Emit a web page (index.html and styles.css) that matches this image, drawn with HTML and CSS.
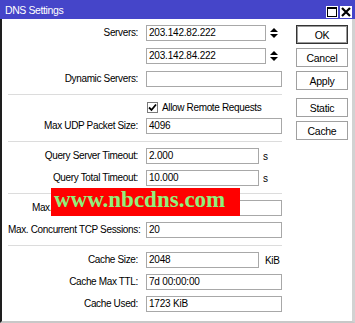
FILE: index.html
```html
<!DOCTYPE html>
<html>
<head>
<meta charset="utf-8">
<link rel="stylesheet" href="styles.css">
</head>
<body>
<div class="window">
  <div class="titlebar">
    <span class="title">DNS Settings</span>
    <div class="tb-btns">
      <span class="tb-btn"><svg width="10" height="10" viewBox="0 0 10 10"><rect x="0.5" y="0.5" width="9" height="9" fill="none" stroke="#000" stroke-width="1"/><rect x="0" y="0" width="10" height="2" fill="#000"/></svg></span>
      <span class="tb-btn"><svg width="10" height="10" viewBox="0 0 10 10"><path d="M1 1 L9 9 M9 1 L1 9" stroke="#000" stroke-width="2.2"/></svg></span>
    </div>
  </div>
  <div class="body">
    <div class="form">
      <div class="sec s1">
        <div class="row"><span class="lbl">Servers:</span><span class="field w-spin">203.142.82.222</span><svg class="spin" width="8" height="10" viewBox="0 0 8 10"><path d="M0 4 L4 0 L8 4 Z M0 6 L8 6 L4 10 Z" fill="#000"/></svg></div>
        <div class="row"><span class="lbl"></span><span class="field w-spin">203.142.84.222</span><svg class="spin" width="8" height="10" viewBox="0 0 8 10"><path d="M0 4 L4 0 L8 4 Z M0 6 L8 6 L4 10 Z" fill="#000"/></svg></div>
        <div class="row"><span class="lbl">Dynamic Servers:</span><span class="field w-full"></span></div>
      </div>
      <div class="sec s2">
        <div class="row"><span class="lbl"></span><span class="check"><svg width="9" height="9" viewBox="0 0 9 9"><path d="M1 4.5 L3.5 7 L8 1.5" fill="none" stroke="#000" stroke-width="1.8"/></svg></span><span class="cb-text">Allow Remote Requests</span></div>
        <div class="row"><span class="lbl">Max UDP Packet Size:</span><span class="field w-full">4096</span></div>
      </div>
      <div class="sec">
        <div class="row"><span class="lbl">Query Server Timeout:</span><span class="field w-unit">2.000</span><span class="unit">s</span></div>
        <div class="row"><span class="lbl">Query Total Timeout:</span><span class="field w-unit">10.000</span><span class="unit">s</span></div>
      </div>
      <div class="sec">
        <div class="row"><span class="lbl">Max. Concurrent Queries:</span><span class="field w-full">100</span></div>
        <div class="row"><span class="lbl">Max. Concurrent TCP Sessions:</span><span class="field w-full">20</span></div>
      </div>
      <div class="sec last">
        <div class="row"><span class="lbl">Cache Size:</span><span class="field w-unit">2048</span><span class="unit kib">KiB</span></div>
        <div class="row"><span class="lbl">Cache Max TTL:</span><span class="field w-full">7d 00:00:00</span></div>
        <div class="row"><span class="lbl">Cache Used:</span><span class="field w-full">1723 KiB</span></div>
      </div>
    </div>
    <div class="buttons">
      <button class="btn default">OK</button>
      <button class="btn">Cancel</button>
      <button class="btn">Apply</button>
      <button class="btn gap">Static</button>
      <button class="btn">Cache</button>
    </div>
  </div>
  <div class="watermark">www.nbcdns.com</div>
</div>
</body>
</html>
```
FILE: styles.css
```css
* { box-sizing: border-box; }
html, body { margin: 0; padding: 0; background: #fff; }
body {
  font-family: "Liberation Sans", Arial, sans-serif;
  font-size: 10px;
  letter-spacing: -0.35px;
  color: #000;
}
.window {
  position: relative;
  width: 355px;
  height: 323px;
}
.titlebar {
  height: 19px;
  background: #4545c9;
  display: flex;
  align-items: center;
  justify-content: space-between;
  padding: 0 3px 0 5px;
}
.title {
  color: #fff;
  font-size: 10.5px;
  letter-spacing: -0.4px;
  line-height: 19px;
  padding-top: 1px;
}
.tb-btns { display: flex; gap: 2px; align-self: flex-end; margin-bottom: 1px; }
.tb-btn {
  width: 12px;
  height: 12px;
  background: #fff;
  display: flex;
  align-items: center;
  justify-content: center;
}
.tb-btn svg { display: block; }
.body {
  display: flex;
  height: 304px;
  border-left: 2px solid #1e1e1e;
  border-right: 3px solid #d2d2d2;
  border-bottom: 2px solid #c8c8c8;
}
.form {
  margin-left: 6px;
  width: 274px;
}
.sec {
  display: flex;
  flex-direction: column;
  gap: 6px;
  padding: 6px 0 7px;
  border-bottom: 1px solid #dcdcdc;
}
.sec.s1 { gap: 7px; padding-top: 6px; padding-bottom: 7px; }
.sec.s2 { gap: 3px; padding-top: 4px; padding-bottom: 7px; }
.sec.last { border-bottom: none; }
.row {
  display: flex;
  align-items: center;
  height: 16px;
}
.lbl {
  width: 130px;
  margin-right: 8px;
  text-align: right;
  white-space: nowrap;
  line-height: 16px;
}
.field {
  height: 16px;
  border: 1px solid #a8a8a8;
  background: #fff;
  padding: 0 2px;
  line-height: 14px;
  letter-spacing: -0.2px;
  white-space: nowrap;
}
.w-full { width: 136px; }
.w-spin { width: 120px; }
.w-unit { width: 113px; }
.spin { margin-left: 4px; display: block; }
.unit { margin-left: 4px; }
.unit.kib { margin-left: 6px; }
.check {
  width: 11px;
  height: 11px;
  border: 1px solid #7a7a7a;
  background: #fff;
  display: flex;
  align-items: center;
  justify-content: center;
  margin-left: 1px;
}
.check svg { display: block; }
.cb-text { margin-left: 4px; white-space: nowrap; }
.buttons {
  margin-left: 14px;
  padding-top: 6px;
  display: flex;
  flex-direction: column;
  gap: 4px;
}
.btn {
  width: 52px;
  height: 19px;
  border: 1px solid #a0a0a0;
  background: #fff;
  font-family: inherit;
  font-size: 10.5px;
  letter-spacing: -0.3px;
  color: #000;
  padding: 0;
  margin: 0;
}
.btn.default { border-color: #333; box-shadow: inset 0 0 0 1px #9a9a9a; }
.btn.gap { margin-top: 4px; }
.watermark {
  position: absolute;
  left: 51px;
  top: 188px;
  width: 189px;
  height: 28px;
  background: #ff0000;
  color: #90f07c;
  font-family: "Liberation Serif", "Times New Roman", serif;
  font-weight: bold;
  font-size: 23px;
  letter-spacing: 0;
  line-height: 24px;
  padding-left: 3px;
  white-space: nowrap;
}
```
